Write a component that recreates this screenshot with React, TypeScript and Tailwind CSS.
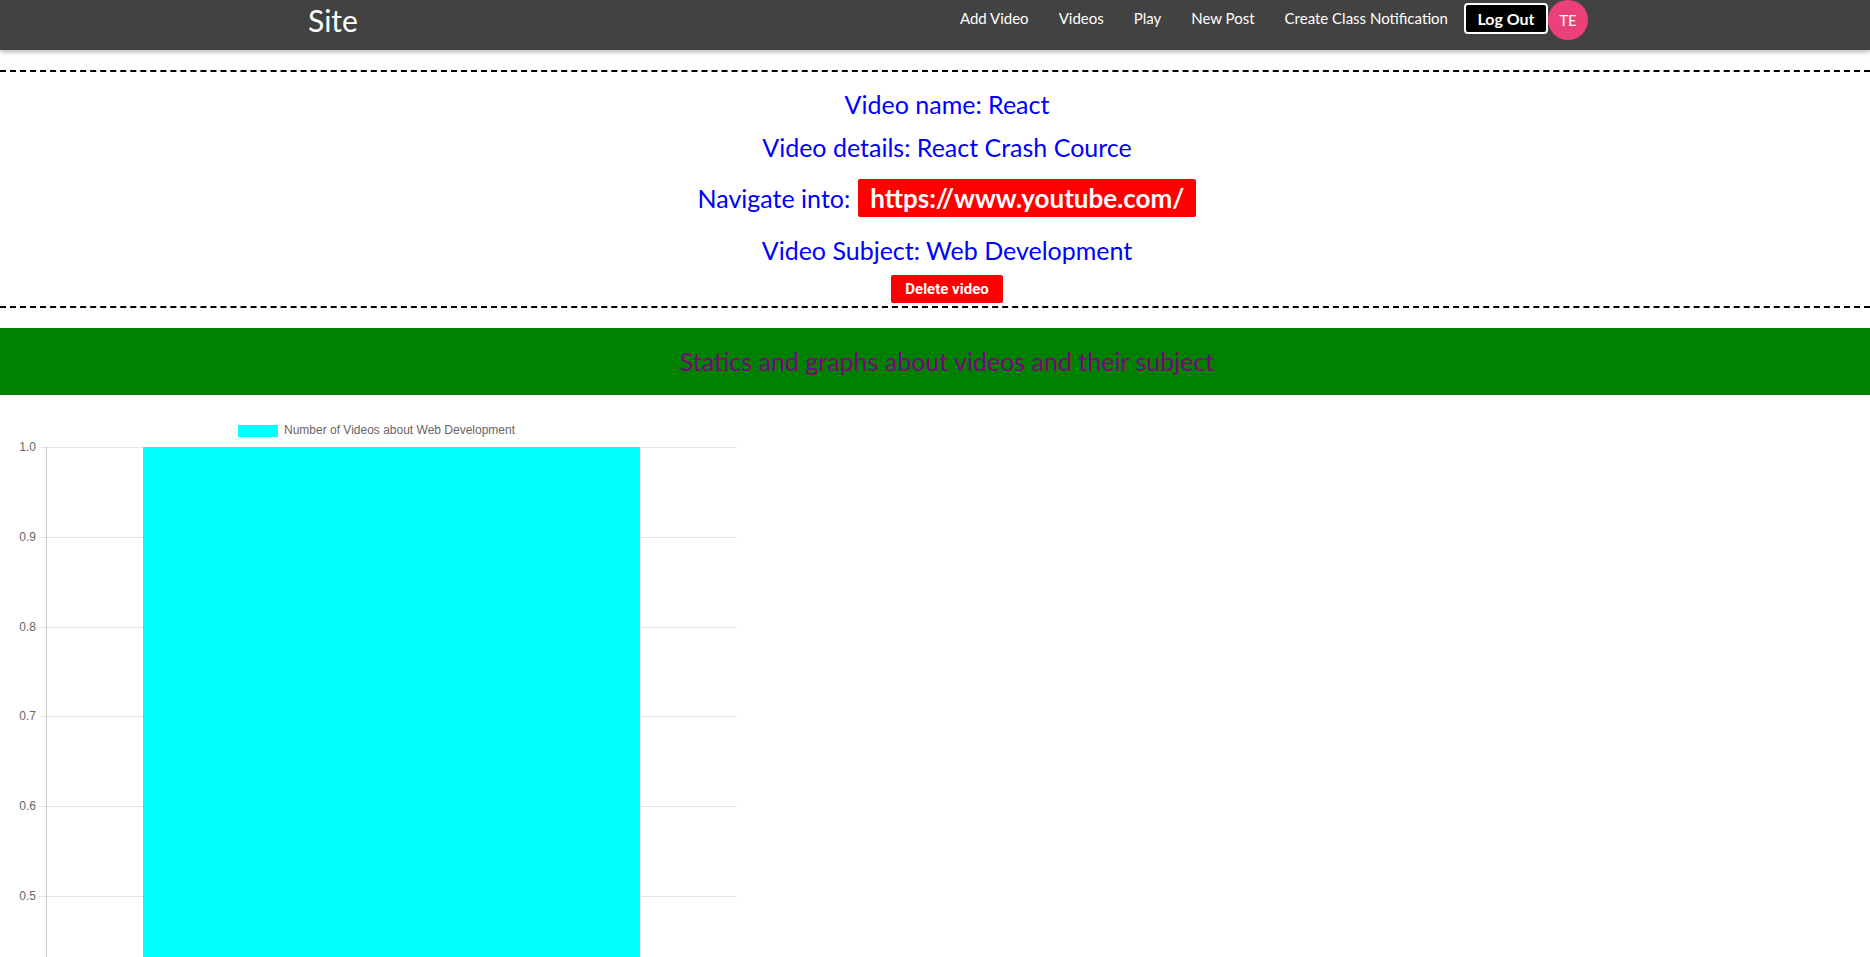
import React from "react";

const navLinks = ["Add Video", "Videos", "Play", "New Post", "Create Class Notification"];

function Chart() {
  const top = 52;
  const step = 89.83;
  const labels = ["1.0", "0.9", "0.8", "0.7", "0.6", "0.5"];
  const h = 562;
  return (
    <svg width="745" height={h} viewBox={`0 0 745 ${h}`} className="block">
      <rect x="238" y="30" width="40" height="12" fill="#00ffff" />
      <text
        x="284"
        y="36"
        dominantBaseline="middle"
        fontFamily="'Liberation Sans', Arial, sans-serif"
        fontSize="12"
        fill="#666"
      >
        Number of Videos about Web Development
      </text>
      {labels.map((l, i) => {
        const y = Math.round(top + i * step) + 0.5;
        return (
          <g key={l}>
            <line x1="39" x2="737" y1={y} y2={y} stroke="rgba(0,0,0,0.1)" strokeWidth="1" />
            <text
              x="36"
              y={y}
              textAnchor="end"
              dominantBaseline="middle"
              fontFamily="'Liberation Sans', Arial, sans-serif"
              fontSize="12"
              fill="#666"
            >
              {l}
            </text>
          </g>
        );
      })}
      <line x1="46.5" x2="46.5" y1={top} y2={h} stroke="rgba(0,0,0,0.2)" strokeWidth="1" />
      <rect x="143" y={top} width="497" height={h - top} fill="#00ffff" />
    </svg>
  );
}

export default function App() {
  return (
    <div className="min-h-screen bg-white font-['Lato','Noto_Sans',sans-serif]">
      <nav className="relative z-10 h-[50px] bg-[#424242] shadow-[0_2px_5px_rgba(0,0,0,0.3)] flex items-start justify-between pl-[308px] pr-[282px]">
        <div className="h-[40px] flex items-center text-[30px] text-white leading-none">Site</div>
        <div className="h-[40px] flex items-center">
          {navLinks.map((l) => (
            <a key={l} className="px-[15px] text-[15px] text-white leading-none cursor-pointer mt-[-4px]">
              {l}
            </a>
          ))}
          <button className="ml-[1px] h-[31px] w-[84px] border-2 border-white rounded-[4px] bg-black text-white font-bold text-[16px] leading-none mt-[-3px]">
            Log Out
          </button>
          <div className="w-[40px] h-[40px] rounded-full bg-[#ec407a] text-white text-[15px] flex items-center justify-center">
            TE
          </div>
        </div>
      </nav>

      <div className="mt-[20px] pl-[24px] border-y-2 border-dashed border-black flex flex-col items-center text-[#0000ff] text-[25px]">
        <div className="mt-[14px] h-[36px] leading-[36px]">Video name: React</div>
        <div className="mt-[7px] h-[36px] leading-[36px]">Video details: React Crash Cource</div>
        <div className="mt-[14px] h-[38px] flex items-center gap-[8px]">
          <span className="leading-[36px]">Navigate into:</span>
          <a className="h-[38px] px-[12px] bg-[#ff0000] text-white font-bold text-[26px] rounded-[2px] flex items-center leading-none cursor-pointer">
            https://www.youtube.com/
          </a>
        </div>
        <div className="mt-[15px] h-[36px] leading-[36px]">Video Subject: Web Development</div>
        <button className="mt-[7px] mb-[3px] h-[28px] w-[112px] bg-[#ff0000] text-white font-bold text-[15px] rounded-[2px] font-['Roboto',sans-serif]">
          Delete video
        </button>
      </div>

      <div className="mt-[20px] pl-[24px] h-[67px] bg-[#008000] flex items-center justify-center text-[#800080] text-[25px]">
        Statics and graphs about videos and their subject
      </div>

      <Chart />
    </div>
  );
}
